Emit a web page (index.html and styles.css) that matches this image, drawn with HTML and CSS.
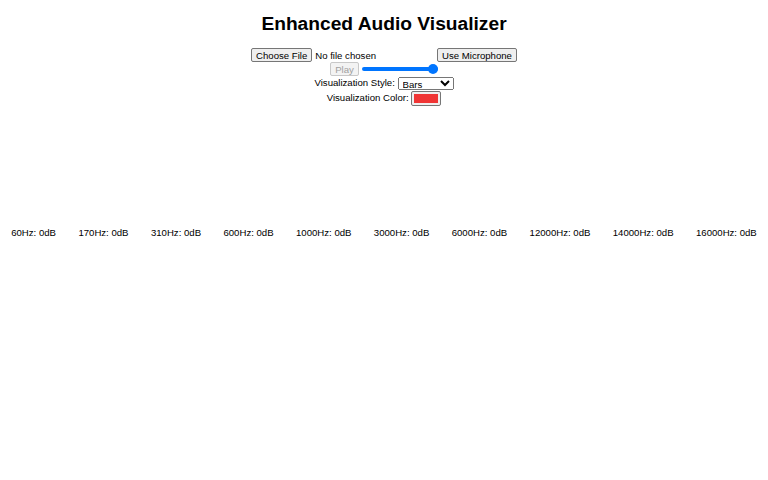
FILE: index.html
```html
<!DOCTYPE html>
<html lang="en">
  <head>
    <meta charset="UTF-8" />
    <meta name="viewport" content="width=device-width, initial-scale=1.0" />
    <title>Enhanced Audio Visualizer</title>
    <link rel="stylesheet" href="styles.css">
  </head>
  <body>
    <h1>Enhanced Audio Visualizer</h1>

    <div class="controls">
      <input type="file" id="audio-file" accept="audio/*" />
      <button id="mic-button">Use Microphone</button>
      <button id="play-button" disabled>Play</button>
      <input type="range" id="volume" min="0" max="1" step="0.01" value="1" />
    </div>

    <div class="option">
      <label for="style">Visualization Style:</label>
      <select id="style">
        <option>Bars</option>
        <option>Wave</option>
        <option>Circle</option>
      </select>
    </div>

    <div class="option">
      <label for="color">Visualization Color:</label>
      <input type="color" id="color" value="#f03535" />
    </div>

    <canvas id="visualizer" width="768" height="120"></canvas>

    <div class="bands">
      <span>60Hz: 0dB</span>
      <span>170Hz: 0dB</span>
      <span>310Hz: 0dB</span>
      <span>600Hz: 0dB</span>
      <span>1000Hz: 0dB</span>
      <span>3000Hz: 0dB</span>
      <span>6000Hz: 0dB</span>
      <span>12000Hz: 0dB</span>
      <span>14000Hz: 0dB</span>
      <span>16000Hz: 0dB</span>
    </div>
  </body>
</html>
```

FILE: styles.css
```css
body {
  margin: 0;
  font-family: "Liberation Sans", Arial, sans-serif;
  font-size: 9.6px;
  color: #000;
  background-color: #fff;
  text-align: center;
}

h1 {
  font-size: 19.2px;
  margin: 13px 0 13px;
}

button,
input,
select {
  font-family: "Liberation Sans", Arial, sans-serif;
  font-size: 9.6px;
}

button {
  height: 14px;
  padding: 0 4px;
  border: 1px solid #767676;
  border-radius: 2px;
  background-color: #efefef;
  color: #000;
}

button:disabled {
  border-color: #c8c8c8;
  background-color: #f3f3f3;
  color: #a0a0a0;
}

#audio-file::file-selector-button {
  height: 14px;
  padding: 0 4px;
  margin-right: 3px;
  border: 1px solid #767676;
  border-radius: 2px;
  background-color: #efefef;
  font-size: 9.6px;
}

.controls {
  width: 280px;
  margin: 0 auto;
  display: flex;
  flex-wrap: wrap;
  justify-content: center;
  align-items: center;
  column-gap: 3px;
}

.controls > * {
  margin: 0;
}

#audio-file {
  width: 183px;
  height: 14px;
}

/* volume slider: thin blue track with a round thumb */
#volume {
  -webkit-appearance: none;
  appearance: none;
  width: 76px;
  height: 14px;
  background: transparent;
}

#volume::-webkit-slider-runnable-track {
  height: 4px;
  border-radius: 2px;
  background-color: #0075ff;
}

#volume::-webkit-slider-thumb {
  -webkit-appearance: none;
  width: 10px;
  height: 10px;
  margin-top: -3px;
  border-radius: 50%;
  background-color: #0075ff;
}

.option {
  height: 14px;
  line-height: 14px;
}

.option + .option {
  height: 15px;
  line-height: 15px;
}

#style {
  width: 56px;
  height: 13px;
  padding: 0;
  vertical-align: middle;
}

#color {
  width: 30px;
  height: 15px;
  padding: 2px;
  border: 1px solid #767676;
  border-radius: 2px;
  background-color: #efefef;
  vertical-align: middle;
}

#color::-webkit-color-swatch-wrapper {
  padding: 0;
}

#color::-webkit-color-swatch {
  border: none;
}

#visualizer {
  display: block;
  width: 768px;
  height: 120px;
}

.bands {
  display: flex;
  justify-content: space-around;
  margin-top: 2px;
}
```
